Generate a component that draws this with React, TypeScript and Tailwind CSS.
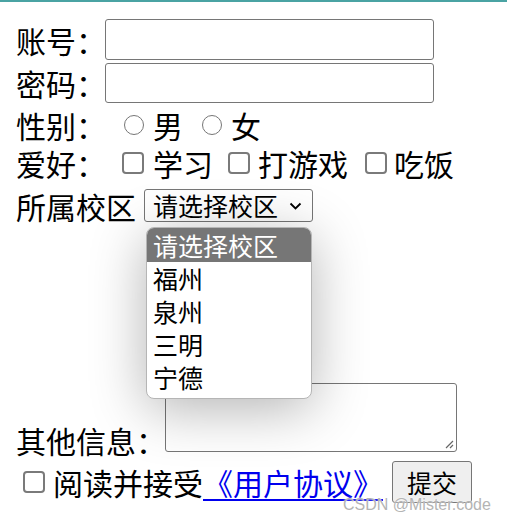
import React from "react";

const campuses = ["福州", "泉州", "三明", "宁德"];

function Radio() {
  return <span className="inline-block w-[20px] h-[20px] rounded-full border-[1.5px] border-[#767676] bg-white shrink-0" />;
}

function Check() {
  return <span className="inline-block w-[22px] h-[22px] rounded-[4px] border-[2px] border-[#7a7a7a] bg-white shrink-0" />;
}

export default function App() {
  return (
    <div className="relative w-[507px] h-[521px] overflow-hidden bg-white text-black text-[30px] font-['Noto_Sans_CJK_SC','Noto_Sans',sans-serif] whitespace-nowrap">
      <div className="h-[2px] bg-[#4aa3a3]" />

      <form className="pl-4 pt-[17px]" onSubmit={(e) => e.preventDefault()}>
        {/* 账号 */}
        <div className="flex items-center h-[41px]">
          <span className="w-[89px] shrink-0 leading-none">账号：</span>
          <div className="w-[329px] h-[41px] shrink-0 border border-[#767676] rounded-[3px]" />
        </div>
        {/* 密码 */}
        <div className="flex items-center h-[40px] mt-[3px]">
          <span className="w-[89px] shrink-0 leading-none">密码：</span>
          <div className="w-[329px] h-[40px] shrink-0 border border-[#767676] rounded-[3px]" />
        </div>
        {/* 性别 */}
        <div className="flex items-center h-[36px] mt-[4px]">
          <span className="w-[108px] shrink-0 leading-none">性别：</span>
          <Radio />
          <span className="ml-[9px] leading-none">男</span>
          <span className="ml-[19px] flex"><Radio /></span>
          <span className="ml-[9px] leading-none">女</span>
        </div>
        {/* 爱好 */}
        <div className="flex items-center h-[36px] mt-[2px]">
          <span className="w-[106px] shrink-0 leading-none">爱好：</span>
          <Check />
          <span className="ml-[9px] leading-none">学习</span>
          <span className="ml-[15px] flex"><Check /></span>
          <span className="ml-[8px] leading-none">打游戏</span>
          <span className="ml-[17px] flex"><Check /></span>
          <span className="ml-[7px] leading-none">吃饭</span>
        </div>
        {/* 所属校区 */}
        <div className="flex items-center h-[33px] mt-[8px]">
          <span className="w-[128px] shrink-0 leading-none">所属校区</span>
          <div className="flex items-center shrink-0 w-[169px] h-[33px] border border-[#767676] rounded-[3px] pl-[8px] pr-[10px]">
            <span className="text-[25px] leading-none flex-1">请选择校区</span>
            <svg width="13" height="8" viewBox="0 0 13 8" fill="none" stroke="#000" strokeWidth="1.8">
              <path d="M1.5 1.5 6.5 6.5l5-5" />
            </svg>
          </div>
        </div>
        {/* 其他信息 */}
        <div className="flex items-end mt-[161px]">
          <span className="w-[149px] shrink-0 leading-none mb-[-3px]">其他信息：</span>
          <div className="relative shrink-0 w-[292px] h-[69px] border border-[#767676] rounded-[3px]">
            <svg className="absolute right-[2px] bottom-[2px]" width="10" height="10" viewBox="0 0 10 10" stroke="#666" strokeWidth="1.2">
              <path d="M9 2 2 9M9 6 6 9" />
            </svg>
          </div>
        </div>
        {/* 协议 + 提交 */}
        <div className="flex items-center h-[42px] mt-[9px]">
          <span className="ml-[7px] flex"><Check /></span>
          <span className="ml-[8px] leading-none">阅读并接受</span>
          <a href="#" className="leading-none text-[#0000ee] underline decoration-2 underline-offset-[4px]">《用户协议》</a>
          <button type="submit" className="ml-[9px] shrink-0 w-[80px] h-[42px] bg-[#efefef] border border-[#767676] rounded-[3px] text-[25px] leading-none">
            提交
          </button>
        </div>
      </form>

      {/* opened select list */}
      <div className="absolute left-[146px] top-[227px] w-[166px] h-[172px] bg-white border border-[#b5b5b5] rounded-[8px] overflow-hidden shadow-[0_10px_55px_rgba(0,0,0,0.3)] text-[25px]">
        <div className="h-[34px] bg-[#767676] text-white pl-[6px] flex items-center leading-none">请选择校区</div>
        {campuses.map((c) => (
          <div key={c} className="h-[33px] pl-[6px] flex items-center leading-none">
            {c}
          </div>
        ))}
      </div>

      <div className="absolute left-[343px] top-[495px] text-[16px] leading-[20px] text-[#b4b4b4] font-['Liberation_Sans',sans-serif] [text-shadow:0_0_2px_#fff]">
        CSDN @Mister.code
      </div>
    </div>
  );
}
